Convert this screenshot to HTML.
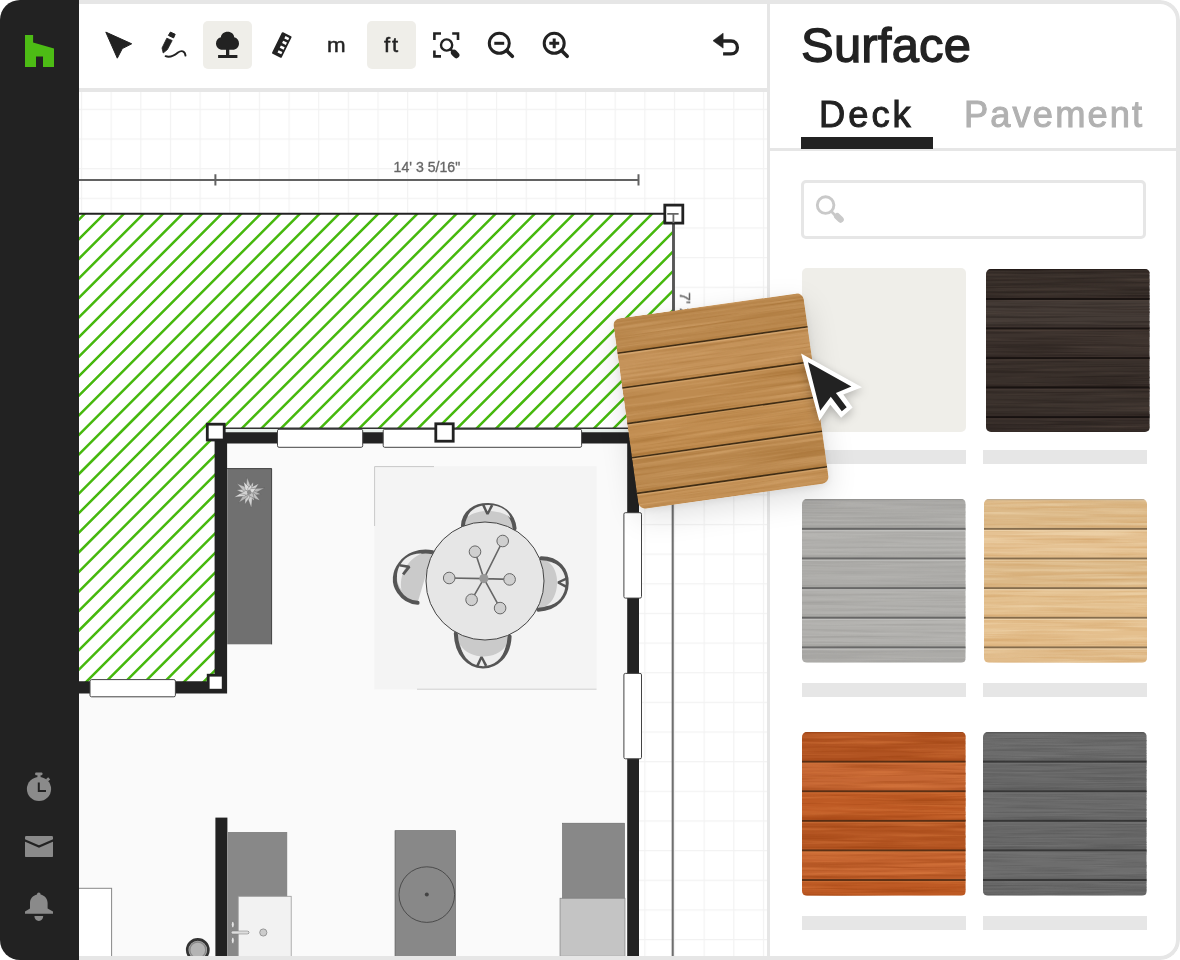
<!DOCTYPE html>
<html><head><meta charset="utf-8">
<style>
html,body{margin:0;padding:0;background:#fff;}
body{width:1180px;height:960px;overflow:hidden;font-family:"Liberation Sans",sans-serif;}
#frame{position:absolute;left:0;top:0;width:1180px;height:960px;border-radius:20px;overflow:hidden;background:#fff;}
.abs{position:absolute;}
svg text,.tt,#title,#tab1,#tab2{will-change:transform;}
#sidebar{left:0;top:0;width:78.9px;height:960px;background:#222;}
#toolbar{left:78px;top:4px;width:689px;height:84px;background:#fff;}
#tbline{left:78px;top:87.8px;width:689px;height:3.8px;background:#e6e6e6;}
#divider{left:767px;top:0;width:3px;height:960px;background:#e6e6e6;}
#panel{left:770px;top:0;width:410px;height:960px;background:#fff;}
#border{left:-20px;top:0;width:1192px;height:952px;border:4px solid #e6e6e6;border-radius:20px;pointer-events:none;}
.btn{width:48.8px;height:48.8px;border-radius:5px;background:#efeee9;}
.tt{color:#222;font-size:20.5px;line-height:24px;-webkit-text-stroke:0.45px #222;}
.sw{width:163.5px;height:163.5px;border-radius:5px;overflow:hidden;}
.lb{height:13.5px;background:#e6e6e6;}
</style></head><body>
<div id="frame">
<svg class="abs" style="left:0;top:0" width="1180" height="960" viewBox="0 0 1180 960">
<defs>
<pattern id="grid" x="51.3" y="108.8" width="29.65" height="29.65" patternUnits="userSpaceOnUse">
<path d="M0.6 0V29.65M0 0.6H29.65" stroke="#f2f2f2" stroke-width="1.2" fill="none"/>
</pattern>
<clipPath id="cv"><rect x="78" y="91" width="689" height="865"/></clipPath>
</defs>
<g clip-path="url(#cv)">
<rect x="78" y="91" width="689" height="865" fill="#fff"/>
<rect x="78" y="91" width="689" height="865" fill="url(#grid)"/>
<!-- hatch area -->
<clipPath id="hc"><path d="M78 214H673.4V428H215V682H78Z"/></clipPath>
<g clip-path="url(#hc)"><rect x="78" y="210" width="600" height="480" fill="#fff"/><path d="M90.50 208L-391.50 690M110.07 208L-371.93 690M129.63 208L-352.37 690M149.20 208L-332.80 690M168.76 208L-313.24 690M188.33 208L-293.67 690M207.90 208L-274.10 690M227.46 208L-254.54 690M247.03 208L-234.97 690M266.59 208L-215.41 690M286.16 208L-195.84 690M305.73 208L-176.27 690M325.29 208L-156.71 690M344.86 208L-137.14 690M364.42 208L-117.58 690M383.99 208L-98.01 690M403.56 208L-78.44 690M423.12 208L-58.88 690M442.69 208L-39.31 690M462.25 208L-19.75 690M481.82 208L-0.18 690M501.39 208L19.39 690M520.95 208L38.95 690M540.52 208L58.52 690M560.08 208L78.08 690M579.65 208L97.65 690M599.22 208L117.22 690M618.78 208L136.78 690M638.35 208L156.35 690M657.91 208L175.91 690M677.48 208L195.48 690M697.05 208L215.05 690M716.61 208L234.61 690M736.18 208L254.18 690M755.74 208L273.74 690M775.31 208L293.31 690M794.88 208L312.88 690M814.44 208L332.44 690M834.01 208L352.01 690M853.57 208L371.57 690M873.14 208L391.14 690M892.71 208L410.71 690M912.27 208L430.27 690M931.84 208L449.84 690M951.40 208L469.40 690M970.97 208L488.97 690M990.54 208L508.54 690M1010.10 208L528.10 690M1029.67 208L547.67 690M1049.23 208L567.23 690M1068.80 208L586.80 690M1088.37 208L606.37 690M1107.93 208L625.93 690M1127.50 208L645.50 690M1147.06 208L665.06 690" stroke="#46b80e" stroke-width="2.5" fill="none"/></g>
<path d="M78 213.8H673.4" stroke="#222" stroke-width="2.1"/>
<!-- vertical dim line right of hatch -->
<path d="M672.7 430V956" stroke="#6e6e6e" stroke-width="2.1"/><path d="M673.5 213.8V432" stroke="#565656" stroke-width="2.9"/>
<!-- floor -->
<path d="M227 443H627.5V956H78V693.5H227Z" fill="#fafafa"/>
<!-- thin strip above wall -->
<rect x="222" y="428" width="417" height="4.6" fill="#e9f0ec"/>
<path d="M222 428.2H639" stroke="#333" stroke-width="1.5"/>
<!-- walls -->
<path d="M214.6 432.3H639V956H627.2V443.5H227.1V693.6H78V681.2H214.6Z" fill="#222"/>
<rect x="215.4" y="817.6" width="12" height="140" fill="#222"/>
<!-- windows -->
<g fill="#fff" stroke="#444" stroke-width="1">
<rect x="277.5" y="429.3" width="85.2" height="18" rx="1.5"/>
<rect x="383.2" y="429.3" width="198.4" height="18" rx="1.5"/>
<rect x="90" y="679.6" width="85.4" height="17.2" rx="1.5"/>
<rect x="623.9" y="512.7" width="17.6" height="85.4" rx="1.5"/>
<rect x="623.9" y="673.4" width="17.6" height="85.4" rx="1.5"/>
</g>
<!-- rug -->
<rect x="374.3" y="466.2" width="222.4" height="223.2" fill="#f4f4f4"/>
<path d="M374.6 526V466.6H434" fill="none" stroke="#c8c8c8" stroke-width="1"/>
<path d="M417 689.2H596.5" fill="none" stroke="#d0d0d0" stroke-width="1"/>
<!-- left cabinet with plant -->
<rect x="227.2" y="468.3" width="44.6" height="176" fill="#707070"/>
<path d="M227 468.6H271.6V644.3" stroke="#3c3c3c" stroke-width="0.9" fill="none"/>
<g transform="translate(249.2 492.2)"><path transform="rotate(-8)" d="M0 1L2.4 -5.2L0 -15L-2.4 -5.2Z" fill="#c4c4c4" stroke="#5a5a5a" stroke-width="0.35"/><path transform="rotate(22)" d="M0 1L2.4 -3.8L0 -11L-2.4 -3.8Z" fill="#dcdcdc" stroke="#5a5a5a" stroke-width="0.35"/><path transform="rotate(48)" d="M0 1L2.4 -4.5L0 -13L-2.4 -4.5Z" fill="#d2d2d2" stroke="#5a5a5a" stroke-width="0.35"/><path transform="rotate(75)" d="M0 1L2.4 -5.6L0 -16L-2.4 -5.6Z" fill="#b8b8b8" stroke="#5a5a5a" stroke-width="0.35"/><path transform="rotate(100)" d="M0 1L2.4 -4.2L0 -12L-2.4 -4.2Z" fill="#b8b8b8" stroke="#5a5a5a" stroke-width="0.35"/><path transform="rotate(128)" d="M0 1L2.4 -4.9L0 -14L-2.4 -4.9Z" fill="#c4c4c4" stroke="#5a5a5a" stroke-width="0.35"/><path transform="rotate(150)" d="M0 1L2.4 -3.5L0 -10L-2.4 -3.5Z" fill="#d2d2d2" stroke="#5a5a5a" stroke-width="0.35"/><path transform="rotate(172)" d="M0 1L2.4 -5.6L0 -16L-2.4 -5.6Z" fill="#d2d2d2" stroke="#5a5a5a" stroke-width="0.35"/><path transform="rotate(200)" d="M0 1L2.4 -4.5L0 -13L-2.4 -4.5Z" fill="#d2d2d2" stroke="#5a5a5a" stroke-width="0.35"/><path transform="rotate(225)" d="M0 1L2.4 -5.2L0 -15L-2.4 -5.2Z" fill="#b8b8b8" stroke="#5a5a5a" stroke-width="0.35"/><path transform="rotate(252)" d="M0 1L2.4 -5.6L0 -16L-2.4 -5.6Z" fill="#dcdcdc" stroke="#5a5a5a" stroke-width="0.35"/><path transform="rotate(280)" d="M0 1L2.4 -4.5L0 -13L-2.4 -4.5Z" fill="#d2d2d2" stroke="#5a5a5a" stroke-width="0.35"/><path transform="rotate(305)" d="M0 1L2.4 -5.2L0 -15L-2.4 -5.2Z" fill="#c4c4c4" stroke="#5a5a5a" stroke-width="0.35"/><path transform="rotate(332)" d="M0 1L2.4 -4.2L0 -12L-2.4 -4.2Z" fill="#dcdcdc" stroke="#5a5a5a" stroke-width="0.35"/><path transform="rotate(15)" d="M0 1L2.4 -2.8L0 -8L-2.4 -2.8Z" fill="#dcdcdc" stroke="#5a5a5a" stroke-width="0.35"/><path transform="rotate(140)" d="M0 1L2.4 -2.8L0 -8L-2.4 -2.8Z" fill="#c4c4c4" stroke="#5a5a5a" stroke-width="0.35"/><path transform="rotate(260)" d="M0 1L2.4 -3.1L0 -9L-2.4 -3.1Z" fill="#d2d2d2" stroke="#5a5a5a" stroke-width="0.35"/><path transform="rotate(60)" d="M0 1L2.4 -2.8L0 -8L-2.4 -2.8Z" fill="#dcdcdc" stroke="#5a5a5a" stroke-width="0.35"/><circle r="2.2" fill="#8a8a8a"/></g>
<!-- dining set -->
<g id="dining">
<g fill="#cacaca" stroke="#555" stroke-width="4" stroke-linecap="round">
<path d="M462.9 526 C464 497.6 512 497.6 514.6 528.4"/>
<path d="M455.8 633.4 C457 677 508 677 509.6 636.4"/>
<path d="M541.2 558.2 C575.5 558 576 608 538.3 609.7"/>
<path d="M432.6 552.3 C405 547 386 574 399 592 C403 598 410 602.4 417.6 602.8"/>
</g>
<g fill="#ededed">
<path d="M467.5 517 C472 501 506 501 510.5 518 C500 509 478 509 467.5 517Z"/>
<path d="M460.5 645 C465 673 501 673 505.5 646 C497 660 469 660 460.5 645Z"/>
<path d="M548 562 C572 563 572 604 546 606 C560 598 561 570 548 562Z"/>
<path d="M422 553.5 C402 552 390 574 401.5 590 C399 576 406 560 422 553.5Z"/>
</g>
<g fill="#555">
<path d="M484.5 504.6L487.6 511.6L490.8 504.8L493.4 505.4L488.6 514.6H486.4L482 505.2Z"/>
<path d="M478.5 666.4L481.6 659.4L484.8 666.2L487.4 665.6L482.6 656.4H480.4L476 665.8Z"/>
<path d="M567.6 579.5L560.6 582.6L567.4 585.8L566.8 588.4L557.6 583.6V581.4L567 577Z"/>
<path d="M399.5 566.5L406.6 567.8L402 573.6L404.2 575.2L410.4 567.4L409.4 565.4L399.2 563.9Z"/>
</g>
<circle cx="485" cy="581" r="59" fill="#e6e6e6" stroke="#444" stroke-width="1"/>
<g stroke="#666" stroke-width="1.6">
<path d="M483.9 578.6L475 551.7M483.9 578.6L502.7 541M483.9 578.6L509.6 579.4M483.9 578.6L500.1 608.1M483.9 578.6L471.6 599.8M483.9 578.6L449.2 578"/>
</g>
<g fill="#cfcfcf" stroke="#666" stroke-width="1">
<circle cx="475" cy="551.7" r="5.8"/><circle cx="502.7" cy="541" r="5.8"/><circle cx="509.6" cy="579.4" r="5.8"/>
<circle cx="500.1" cy="608.1" r="5.8"/><circle cx="471.6" cy="599.8" r="5.8"/><circle cx="449.2" cy="578" r="5.8"/>
</g>
<circle cx="483.9" cy="578.6" r="4.6" fill="#999"/>
</g>
<!-- bottom furniture -->
<rect x="227.6" y="832" width="59.6" height="125" fill="#888"/>
<rect x="238.2" y="896.3" width="53" height="61" fill="#f2f2f2" stroke="#999" stroke-width="0.8"/>
<path d="M232.7 932.5H247.5" stroke="#777" stroke-width="3.6" stroke-linecap="round"/><path d="M232.7 932.5H247.5" stroke="#ddd" stroke-width="2.4" stroke-linecap="round"/><g fill="#e4e4e4" stroke="#666" stroke-width="0.6"><ellipse cx="232.8" cy="924.6" rx="1.5" ry="3.2"/><ellipse cx="232.8" cy="940.4" rx="1.5" ry="3.2"/></g>
<circle cx="263.3" cy="932.5" r="3.6" fill="#ccc" stroke="#888" stroke-width="0.8"/>
<rect x="395" y="830.7" width="60.4" height="126" fill="#888" stroke="#555" stroke-width="0.6"/>
<circle cx="426.8" cy="894.6" r="27.8" fill="none" stroke="#444" stroke-width="0.9"/>
<circle cx="426.8" cy="894.6" r="2" fill="#444"/>
<rect x="562.5" y="823.2" width="62" height="76" fill="#888" stroke="#666" stroke-width="0.6"/>
<rect x="560" y="898.2" width="65" height="58" fill="#c4c4c4" stroke="#777" stroke-width="0.6"/>
<rect x="70" y="888.3" width="41.6" height="70" fill="#fff" stroke="#888" stroke-width="1"/>
<circle cx="197.8" cy="950" r="10.6" fill="#b4b4b4" stroke="#333" stroke-width="2.6"/><circle cx="197.8" cy="950" r="8" fill="none" stroke="#8a8a8a" stroke-width="1.4"/>
<!-- dimension line -->
<path d="M78 180H638.5M215.4 174.2V185.6M638.5 174.2V185.6" stroke="#626262" stroke-width="2" fill="none"/>
<text x="393.6" y="172" font-family="Liberation Sans, sans-serif" font-size="15.4" fill="#666" stroke="#666" stroke-width="0.35" textLength="66.6" lengthAdjust="spacingAndGlyphs">14' 3 5/16"</text>
<text transform="translate(680 292.4) rotate(90)" font-family="Liberation Sans, sans-serif" font-size="15.4" fill="#666" stroke="#666" stroke-width="0.35">7' 2 3/8"</text>
<!-- handles -->
<g fill="#fff" stroke="#222" stroke-width="2.8">
<rect x="664.8" y="205.1" width="18" height="18"/>
<rect x="207.3" y="424.2" width="16.9" height="15.8"/>
<rect x="435.8" y="423.8" width="17.4" height="17.4"/>
<rect x="208.2" y="675.2" width="15" height="15"/>
</g>
<path d="M667.2 213.8H678.6M673.4 213.8V223" stroke="#666" stroke-width="1.8"/>
</g>
</svg>
<div id="toolbar" class="abs"></div>
<div id="tbline" class="abs"></div>
<div class="abs btn" style="left:203.3px;top:20.7px"></div>
<div class="abs btn" style="left:366.9px;top:20.7px"></div>
<svg class="abs" style="left:0;top:0" width="770" height="92" viewBox="0 0 770 92" fill="#222">
<!-- select arrow -->
<path d="M105.8 32.1L131.7 43.8L122.3 48.6L117.3 58.2Z" stroke="#222" stroke-width="1" stroke-linejoin="round"/>
<!-- pencil -->
<path d="M170.4 32.1L175.2 34.3L173.6 37.9L168.4 35.4Z" stroke="#222" stroke-width="1" stroke-linejoin="round"/>
<path d="M166.8 38.2L172.2 40.5L167.4 49.6L163.2 53L162 48Z" stroke="#222" stroke-width="0.8" stroke-linejoin="round"/>
<path d="M165.6 56.2C171 58 175 55 178 52.5C181.5 50 185 51 185.5 55.6" fill="none" stroke="#222" stroke-width="1.9" stroke-linecap="round"/>
<!-- tree -->
<path d="M227.6 31.8C231.4 31.8 234 34.3 234.2 37.2C237.2 37.8 239 40.4 239 43.4C239 47 236.3 49.7 232.6 49.7H229.3V55H237.4V58H218.1V55H226V49.7H222.4C218.8 49.7 216 47 216 43.4C216 40.4 217.9 37.8 220.9 37.2C221.2 34.3 223.8 31.8 227.6 31.8Z"/>
<!-- ruler -->
<g transform="translate(281.8 45) rotate(26)">
<rect x="-5.4" y="-12" width="10.8" height="24" rx="1"/>
<g fill="#fff"><rect x="-0.6" y="-9.6" width="4.2" height="2.6"/><rect x="-0.6" y="-4.4" width="4.2" height="2.6"/><rect x="-0.6" y="0.8" width="4.2" height="2.6"/><rect x="-0.6" y="6" width="4.2" height="2.6"/></g>
</g>
<!-- fit zoom -->
<g fill="none" stroke="#222" stroke-width="2.6">
<path d="M434.4 40V33.5H441M452.2 33.5H458V40M434.4 50.5V56.4H441"/>
<circle cx="446.6" cy="45" r="5.6" stroke-width="2.4"/>
<path d="M450.4 49.2L454 52.8" stroke-width="2.6"/><path d="M454 52.8L456.3 55.1" stroke-width="6.2" stroke-linecap="round"/>
</g>
<!-- zoom out -->
<g fill="none" stroke="#222" stroke-width="3">
<circle cx="499.3" cy="43.3" r="10"/>
<path d="M506.6 50.6L512.3 56.3" stroke-width="3.6" stroke-linecap="round"/>
<path d="M494.3 43.3H504.2" stroke-width="3"/>
<circle cx="554.2" cy="43.3" r="10"/>
<path d="M561.5 50.6L567.2 56.3" stroke-width="3.6" stroke-linecap="round"/>
<path d="M549.3 43.3H559.2M554.2 38.4V48.2" stroke-width="3"/>
</g>
<!-- undo -->
<path d="M713 40.7L723.1 33.2V48.1Z" stroke="#222" stroke-width="0.6" stroke-linejoin="round"/>
<path d="M722 41H731C735 41 737.4 44 737.4 47.5C737.4 51 735 53.9 731 53.9H723.1" fill="none" stroke="#222" stroke-width="3.3"/>
</svg>
<div class="abs tt" style="left:327.2px;top:33.1px;transform:scaleX(1.09);transform-origin:0 0;">m</div>
<div class="abs tt" style="left:384px;top:33.1px;letter-spacing:1.6px;transform:scaleX(1.08);transform-origin:0 0;">ft</div>
<div id="divider" class="abs"></div>
<div id="panel" class="abs"></div>
<div class="abs" id="title" style="left:800.7px;top:15.7px;font-size:49px;line-height:58px;font-weight:normal;color:#222;-webkit-text-stroke:1.3px #222;letter-spacing:0.2px;white-space:nowrap;">Surface</div>
<div class="abs" id="tab1" style="left:819px;top:94px;font-size:36.3px;line-height:42px;font-weight:normal;color:#222;-webkit-text-stroke:1px #222;letter-spacing:3px;white-space:nowrap;">Deck</div>
<div class="abs" id="tab2" style="left:963.8px;top:94px;font-size:36.3px;line-height:42px;font-weight:normal;color:#b1b1b1;-webkit-text-stroke:1px #b1b1b1;letter-spacing:2.1px;white-space:nowrap;">Pavement</div>
<div class="abs" style="left:770px;top:148.2px;width:406px;height:2.8px;background:#e6e6e6;"></div>
<div class="abs" style="left:801px;top:137.3px;width:132.3px;height:11.5px;background:#222;"></div>
<div class="abs" style="left:801.2px;top:179.5px;width:338.8px;height:53.9px;border:3px solid #e6e6e6;border-radius:5px;"></div>
<svg class="abs" style="left:810px;top:190px" width="40" height="40" viewBox="810 190 40 40"><circle cx="825.6" cy="205.1" r="8.3" fill="none" stroke="#c9c9c9" stroke-width="2.9"/><path d="M831 211L838 218.5" stroke="#c9c9c9" stroke-width="2.6"/><path d="M837.2 216.2L840.6 219.6" stroke="#c9c9c9" stroke-width="6.4" stroke-linecap="round"/></svg>
<div class="abs sw" style="left:802.2px;top:268px;background:#efeee9;"></div>
<!--SW0--><svg class="abs sw" style="left:986px;top:268.5px" width="163.6" height="163.6" viewBox="0 0 163.6 163.6">
<defs><filter id="ddk" x="0" y="0" width="100%" height="100%" color-interpolation-filters="sRGB"><feTurbulence type="fractalNoise" baseFrequency="0.008 0.4" numOctaves="3" seed="11"/><feColorMatrix type="matrix" values="0 0 0 0 0.102  0 0 0 0 0.075  0 0 0 0 0.067  2.2 0 0 0 -0.95"/></filter><filter id="ldk" x="0" y="0" width="100%" height="100%" color-interpolation-filters="sRGB"><feTurbulence type="fractalNoise" baseFrequency="0.008 0.4" numOctaves="3" seed="24"/><feColorMatrix type="matrix" values="0 0 0 0 0.333  0 0 0 0 0.278  0 0 0 0 0.247  2.2 0 0 0 -0.95"/></filter></defs>
<rect width="163.6" height="163.6" fill="#3d332e"/>
<rect x="0" y="0.00" width="163.6" height="30.00" fill="#000" opacity="0.050"/>
<rect x="0" y="30.00" width="163.6" height="29.55" fill="#fff" opacity="0.040"/>
<rect x="0" y="89.10" width="163.6" height="29.55" fill="#000" opacity="0.050"/>
<rect x="0" y="118.65" width="163.6" height="29.55" fill="#000" opacity="0.020"/>
<rect x="0" y="148.20" width="163.6" height="15.40" fill="#000" opacity="0.120"/>
<g transform="translate(0 0)"><rect x="-3" y="0.00" width="169.6" height="30.00" filter="url(#ldk)" opacity="0.5"/><rect x="-3" y="0.00" width="169.6" height="30.00" filter="url(#ddk)" opacity="0.45"/></g>
<g transform="translate(-71 0)"><rect x="68" y="30.00" width="169.6" height="29.55" filter="url(#ldk)" opacity="0.5"/><rect x="68" y="30.00" width="169.6" height="29.55" filter="url(#ddk)" opacity="0.45"/></g>
<g transform="translate(-142 0)"><rect x="139" y="59.55" width="169.6" height="29.55" filter="url(#ldk)" opacity="0.5"/><rect x="139" y="59.55" width="169.6" height="29.55" filter="url(#ddk)" opacity="0.45"/></g>
<g transform="translate(-63 0)"><rect x="60" y="89.10" width="169.6" height="29.55" filter="url(#ldk)" opacity="0.5"/><rect x="60" y="89.10" width="169.6" height="29.55" filter="url(#ddk)" opacity="0.45"/></g>
<g transform="translate(-134 0)"><rect x="131" y="118.65" width="169.6" height="29.55" filter="url(#ldk)" opacity="0.5"/><rect x="131" y="118.65" width="169.6" height="29.55" filter="url(#ddk)" opacity="0.45"/></g>
<g transform="translate(-55 0)"><rect x="52" y="148.20" width="169.6" height="15.40" filter="url(#ldk)" opacity="0.5"/><rect x="52" y="148.20" width="169.6" height="15.40" filter="url(#ddk)" opacity="0.45"/></g>
<rect x="0" y="26.40" width="163.6" height="3" fill="#1a1311" opacity="0.22"/>
<rect x="0" y="29.00" width="163.6" height="2.0" fill="#120d0b" opacity="0.8"/>
<rect x="0" y="31.00" width="163.6" height="1.4" fill="#5a4a42" opacity="0.25"/>
<rect x="0" y="55.95" width="163.6" height="3" fill="#1a1311" opacity="0.22"/>
<rect x="0" y="58.55" width="163.6" height="2.0" fill="#120d0b" opacity="0.8"/>
<rect x="0" y="60.55" width="163.6" height="1.4" fill="#5a4a42" opacity="0.25"/>
<rect x="0" y="85.50" width="163.6" height="3" fill="#1a1311" opacity="0.22"/>
<rect x="0" y="88.10" width="163.6" height="2.0" fill="#120d0b" opacity="0.8"/>
<rect x="0" y="90.10" width="163.6" height="1.4" fill="#5a4a42" opacity="0.25"/>
<rect x="0" y="115.05" width="163.6" height="3" fill="#1a1311" opacity="0.22"/>
<rect x="0" y="117.65" width="163.6" height="2.0" fill="#120d0b" opacity="0.8"/>
<rect x="0" y="119.65" width="163.6" height="1.4" fill="#5a4a42" opacity="0.25"/>
<rect x="0" y="144.60" width="163.6" height="3" fill="#1a1311" opacity="0.22"/>
<rect x="0" y="147.20" width="163.6" height="2.0" fill="#120d0b" opacity="0.8"/>
<rect x="0" y="149.20" width="163.6" height="1.4" fill="#5a4a42" opacity="0.25"/>
<rect x="0" y="0" width="163.6" height="1.2" fill="#1a1311" opacity="0.6"/>
</svg>
<svg class="abs sw" style="left:802px;top:499.3px" width="163.6" height="163.6" viewBox="0 0 163.6 163.6">
<defs><filter id="dgr" x="0" y="0" width="100%" height="100%" color-interpolation-filters="sRGB"><feTurbulence type="fractalNoise" baseFrequency="0.008 0.4" numOctaves="3" seed="5"/><feColorMatrix type="matrix" values="0 0 0 0 0.541  0 0 0 0 0.537  0 0 0 0 0.525  2.2 0 0 0 -0.95"/></filter><filter id="lgr" x="0" y="0" width="100%" height="100%" color-interpolation-filters="sRGB"><feTurbulence type="fractalNoise" baseFrequency="0.008 0.4" numOctaves="3" seed="18"/><feColorMatrix type="matrix" values="0 0 0 0 0.776  0 0 0 0 0.773  0 0 0 0 0.761  2.2 0 0 0 -0.95"/></filter></defs>
<rect width="163.6" height="163.6" fill="#b0afac"/>
<rect x="0" y="0.00" width="163.6" height="29.90" fill="#000" opacity="0.020"/>
<rect x="0" y="29.90" width="163.6" height="29.65" fill="#fff" opacity="0.020"/>
<rect x="0" y="59.55" width="163.6" height="29.65" fill="#000" opacity="0.010"/>
<rect x="0" y="89.20" width="163.6" height="29.65" fill="#fff" opacity="0.010"/>
<rect x="0" y="118.85" width="163.6" height="29.65" fill="#fff" opacity="0.030"/>
<rect x="0" y="148.50" width="163.6" height="15.10" fill="#000" opacity="0.020"/>
<g transform="translate(0 0)"><rect x="-3" y="0.00" width="169.6" height="29.90" filter="url(#lgr)" opacity="0.32"/><rect x="-3" y="0.00" width="169.6" height="29.90" filter="url(#dgr)" opacity="0.32"/></g>
<g transform="translate(-71 0)"><rect x="68" y="29.90" width="169.6" height="29.65" filter="url(#lgr)" opacity="0.32"/><rect x="68" y="29.90" width="169.6" height="29.65" filter="url(#dgr)" opacity="0.32"/></g>
<g transform="translate(-142 0)"><rect x="139" y="59.55" width="169.6" height="29.65" filter="url(#lgr)" opacity="0.32"/><rect x="139" y="59.55" width="169.6" height="29.65" filter="url(#dgr)" opacity="0.32"/></g>
<g transform="translate(-63 0)"><rect x="60" y="89.20" width="169.6" height="29.65" filter="url(#lgr)" opacity="0.32"/><rect x="60" y="89.20" width="169.6" height="29.65" filter="url(#dgr)" opacity="0.32"/></g>
<g transform="translate(-134 0)"><rect x="131" y="118.85" width="169.6" height="29.65" filter="url(#lgr)" opacity="0.32"/><rect x="131" y="118.85" width="169.6" height="29.65" filter="url(#dgr)" opacity="0.32"/></g>
<g transform="translate(-55 0)"><rect x="52" y="148.50" width="169.6" height="15.10" filter="url(#lgr)" opacity="0.32"/><rect x="52" y="148.50" width="169.6" height="15.10" filter="url(#dgr)" opacity="0.32"/></g>
<rect x="0" y="26.30" width="163.6" height="3" fill="#8a8986" opacity="0.22"/>
<rect x="0" y="28.90" width="163.6" height="2.0" fill="#555" opacity="0.78"/>
<rect x="0" y="30.90" width="163.6" height="1.4" fill="#d0d0ce" opacity="0.5"/>
<rect x="0" y="55.95" width="163.6" height="3" fill="#8a8986" opacity="0.22"/>
<rect x="0" y="58.55" width="163.6" height="2.0" fill="#555" opacity="0.78"/>
<rect x="0" y="60.55" width="163.6" height="1.4" fill="#d0d0ce" opacity="0.5"/>
<rect x="0" y="85.60" width="163.6" height="3" fill="#8a8986" opacity="0.22"/>
<rect x="0" y="88.20" width="163.6" height="2.0" fill="#555" opacity="0.78"/>
<rect x="0" y="90.20" width="163.6" height="1.4" fill="#d0d0ce" opacity="0.5"/>
<rect x="0" y="115.25" width="163.6" height="3" fill="#8a8986" opacity="0.22"/>
<rect x="0" y="117.85" width="163.6" height="2.0" fill="#555" opacity="0.78"/>
<rect x="0" y="119.85" width="163.6" height="1.4" fill="#d0d0ce" opacity="0.5"/>
<rect x="0" y="144.90" width="163.6" height="3" fill="#8a8986" opacity="0.22"/>
<rect x="0" y="147.50" width="163.6" height="2.0" fill="#555" opacity="0.78"/>
<rect x="0" y="149.50" width="163.6" height="1.4" fill="#d0d0ce" opacity="0.5"/>
<rect x="0" y="0" width="163.6" height="1.2" fill="#8a8a88" opacity="0.6"/>
</svg>
<svg class="abs sw" style="left:983.8px;top:499.3px" width="163.6" height="163.6" viewBox="0 0 163.6 163.6">
<defs><filter id="dtn" x="0" y="0" width="100%" height="100%" color-interpolation-filters="sRGB"><feTurbulence type="fractalNoise" baseFrequency="0.009 0.3" numOctaves="3" seed="23"/><feColorMatrix type="matrix" values="0 0 0 0 0.812  0 0 0 0 0.612  0 0 0 0 0.369  2.2 0 0 0 -0.95"/></filter><filter id="ltn" x="0" y="0" width="100%" height="100%" color-interpolation-filters="sRGB"><feTurbulence type="fractalNoise" baseFrequency="0.009 0.3" numOctaves="3" seed="36"/><feColorMatrix type="matrix" values="0 0 0 0 0.957  0 0 0 0 0.875  0 0 0 0 0.733  2.2 0 0 0 -0.95"/></filter></defs>
<rect width="163.6" height="163.6" fill="#e4bf8d"/>
<rect x="0" y="0.00" width="163.6" height="29.90" fill="#000" opacity="0.030"/>
<rect x="0" y="29.90" width="163.6" height="29.65" fill="#fff" opacity="0.060"/>
<rect x="0" y="59.55" width="163.6" height="29.65" fill="#000" opacity="0.030"/>
<rect x="0" y="89.20" width="163.6" height="29.65" fill="#fff" opacity="0.030"/>
<rect x="0" y="148.50" width="163.6" height="15.10" fill="#000" opacity="0.010"/>
<g transform="translate(0 0)"><rect x="-3" y="0.00" width="169.6" height="29.90" filter="url(#ltn)" opacity="0.55"/><rect x="-3" y="0.00" width="169.6" height="29.90" filter="url(#dtn)" opacity="0.55"/></g>
<g transform="translate(-71 0)"><rect x="68" y="29.90" width="169.6" height="29.65" filter="url(#ltn)" opacity="0.55"/><rect x="68" y="29.90" width="169.6" height="29.65" filter="url(#dtn)" opacity="0.55"/></g>
<g transform="translate(-142 0)"><rect x="139" y="59.55" width="169.6" height="29.65" filter="url(#ltn)" opacity="0.55"/><rect x="139" y="59.55" width="169.6" height="29.65" filter="url(#dtn)" opacity="0.55"/></g>
<g transform="translate(-63 0)"><rect x="60" y="89.20" width="169.6" height="29.65" filter="url(#ltn)" opacity="0.55"/><rect x="60" y="89.20" width="169.6" height="29.65" filter="url(#dtn)" opacity="0.55"/></g>
<g transform="translate(-134 0)"><rect x="131" y="118.85" width="169.6" height="29.65" filter="url(#ltn)" opacity="0.55"/><rect x="131" y="118.85" width="169.6" height="29.65" filter="url(#dtn)" opacity="0.55"/></g>
<g transform="translate(-55 0)"><rect x="52" y="148.50" width="169.6" height="15.10" filter="url(#ltn)" opacity="0.55"/><rect x="52" y="148.50" width="169.6" height="15.10" filter="url(#dtn)" opacity="0.55"/></g>
<rect x="0" y="26.30" width="163.6" height="3" fill="#cf9c5e" opacity="0.22"/>
<rect x="0" y="28.95" width="163.6" height="1.9" fill="#6b573c" opacity="0.78"/>
<rect x="0" y="30.85" width="163.6" height="1.4" fill="#f6e4c4" opacity="0.5"/>
<rect x="0" y="55.95" width="163.6" height="3" fill="#cf9c5e" opacity="0.22"/>
<rect x="0" y="58.60" width="163.6" height="1.9" fill="#6b573c" opacity="0.78"/>
<rect x="0" y="60.50" width="163.6" height="1.4" fill="#f6e4c4" opacity="0.5"/>
<rect x="0" y="85.60" width="163.6" height="3" fill="#cf9c5e" opacity="0.22"/>
<rect x="0" y="88.25" width="163.6" height="1.9" fill="#6b573c" opacity="0.78"/>
<rect x="0" y="90.15" width="163.6" height="1.4" fill="#f6e4c4" opacity="0.5"/>
<rect x="0" y="115.25" width="163.6" height="3" fill="#cf9c5e" opacity="0.22"/>
<rect x="0" y="117.90" width="163.6" height="1.9" fill="#6b573c" opacity="0.78"/>
<rect x="0" y="119.80" width="163.6" height="1.4" fill="#f6e4c4" opacity="0.5"/>
<rect x="0" y="144.90" width="163.6" height="3" fill="#cf9c5e" opacity="0.22"/>
<rect x="0" y="147.55" width="163.6" height="1.9" fill="#6b573c" opacity="0.78"/>
<rect x="0" y="149.45" width="163.6" height="1.4" fill="#f6e4c4" opacity="0.5"/>
<rect x="0" y="0" width="163.6" height="1.2" fill="#a9a095" opacity="0.6"/>
</svg>
<svg class="abs sw" style="left:802px;top:732.2px" width="163.6" height="163.6" viewBox="0 0 163.6 163.6">
<defs><filter id="dor" x="0" y="0" width="100%" height="100%" color-interpolation-filters="sRGB"><feTurbulence type="fractalNoise" baseFrequency="0.009 0.3" numOctaves="3" seed="31"/><feColorMatrix type="matrix" values="0 0 0 0 0.588  0 0 0 0 0.235  0 0 0 0 0.047  2.2 0 0 0 -0.95"/></filter><filter id="lor" x="0" y="0" width="100%" height="100%" color-interpolation-filters="sRGB"><feTurbulence type="fractalNoise" baseFrequency="0.009 0.3" numOctaves="3" seed="44"/><feColorMatrix type="matrix" values="0 0 0 0 0.871  0 0 0 0 0.498  0 0 0 0 0.263  2.2 0 0 0 -0.95"/></filter></defs>
<rect width="163.6" height="163.6" fill="#c25c25"/>
<rect x="0" y="0.00" width="163.6" height="29.70" fill="#000" opacity="0.080"/>
<rect x="0" y="29.70" width="163.6" height="29.60" fill="#fff" opacity="0.070"/>
<rect x="0" y="59.30" width="163.6" height="29.60" fill="#000" opacity="0.020"/>
<rect x="0" y="88.90" width="163.6" height="29.60" fill="#000" opacity="0.070"/>
<rect x="0" y="118.50" width="163.6" height="29.60" fill="#fff" opacity="0.050"/>
<rect x="0" y="148.10" width="163.6" height="15.50" fill="#000" opacity="0.020"/>
<g transform="translate(0 0)"><rect x="-3" y="0.00" width="169.6" height="29.70" filter="url(#lor)" opacity="0.55"/><rect x="-3" y="0.00" width="169.6" height="29.70" filter="url(#dor)" opacity="0.55"/></g>
<g transform="translate(-71 0)"><rect x="68" y="29.70" width="169.6" height="29.60" filter="url(#lor)" opacity="0.55"/><rect x="68" y="29.70" width="169.6" height="29.60" filter="url(#dor)" opacity="0.55"/></g>
<g transform="translate(-142 0)"><rect x="139" y="59.30" width="169.6" height="29.60" filter="url(#lor)" opacity="0.55"/><rect x="139" y="59.30" width="169.6" height="29.60" filter="url(#dor)" opacity="0.55"/></g>
<g transform="translate(-63 0)"><rect x="60" y="88.90" width="169.6" height="29.60" filter="url(#lor)" opacity="0.55"/><rect x="60" y="88.90" width="169.6" height="29.60" filter="url(#dor)" opacity="0.55"/></g>
<g transform="translate(-134 0)"><rect x="131" y="118.50" width="169.6" height="29.60" filter="url(#lor)" opacity="0.55"/><rect x="131" y="118.50" width="169.6" height="29.60" filter="url(#dor)" opacity="0.55"/></g>
<g transform="translate(-55 0)"><rect x="52" y="148.10" width="169.6" height="15.50" filter="url(#lor)" opacity="0.55"/><rect x="52" y="148.10" width="169.6" height="15.50" filter="url(#dor)" opacity="0.55"/></g>
<rect x="0" y="26.10" width="163.6" height="3" fill="#963c0c" opacity="0.22"/>
<rect x="0" y="28.75" width="163.6" height="1.9" fill="#3e2210" opacity="0.78"/>
<rect x="0" y="30.65" width="163.6" height="1.4" fill="#e08a4c" opacity="0.35"/>
<rect x="0" y="55.70" width="163.6" height="3" fill="#963c0c" opacity="0.22"/>
<rect x="0" y="58.35" width="163.6" height="1.9" fill="#3e2210" opacity="0.78"/>
<rect x="0" y="60.25" width="163.6" height="1.4" fill="#e08a4c" opacity="0.35"/>
<rect x="0" y="85.30" width="163.6" height="3" fill="#963c0c" opacity="0.22"/>
<rect x="0" y="87.95" width="163.6" height="1.9" fill="#3e2210" opacity="0.78"/>
<rect x="0" y="89.85" width="163.6" height="1.4" fill="#e08a4c" opacity="0.35"/>
<rect x="0" y="114.90" width="163.6" height="3" fill="#963c0c" opacity="0.22"/>
<rect x="0" y="117.55" width="163.6" height="1.9" fill="#3e2210" opacity="0.78"/>
<rect x="0" y="119.45" width="163.6" height="1.4" fill="#e08a4c" opacity="0.35"/>
<rect x="0" y="144.50" width="163.6" height="3" fill="#963c0c" opacity="0.22"/>
<rect x="0" y="147.15" width="163.6" height="1.9" fill="#3e2210" opacity="0.78"/>
<rect x="0" y="149.05" width="163.6" height="1.4" fill="#e08a4c" opacity="0.35"/>
<rect x="0" y="0" width="163.6" height="1.2" fill="#8c3a10" opacity="0.6"/>
</svg>
<svg class="abs sw" style="left:983.4px;top:732.2px" width="163.6" height="163.6" viewBox="0 0 163.6 163.6">
<defs><filter id="ddg" x="0" y="0" width="100%" height="100%" color-interpolation-filters="sRGB"><feTurbulence type="fractalNoise" baseFrequency="0.012 0.6" numOctaves="3" seed="41"/><feColorMatrix type="matrix" values="0 0 0 0 0.306  0 0 0 0 0.306  0 0 0 0 0.306  2.2 0 0 0 -0.95"/></filter><filter id="ldg" x="0" y="0" width="100%" height="100%" color-interpolation-filters="sRGB"><feTurbulence type="fractalNoise" baseFrequency="0.012 0.6" numOctaves="3" seed="54"/><feColorMatrix type="matrix" values="0 0 0 0 0.494  0 0 0 0 0.494  0 0 0 0 0.494  2.2 0 0 0 -0.95"/></filter></defs>
<rect width="163.6" height="163.6" fill="#6b6b6b"/>
<rect x="0" y="0.00" width="163.6" height="29.70" fill="#fff" opacity="0.010"/>
<rect x="0" y="29.70" width="163.6" height="29.60" fill="#000" opacity="0.030"/>
<rect x="0" y="88.90" width="163.6" height="29.60" fill="#000" opacity="0.020"/>
<rect x="0" y="118.50" width="163.6" height="29.60" fill="#fff" opacity="0.020"/>
<rect x="0" y="148.10" width="163.6" height="15.50" fill="#000" opacity="0.020"/>
<g transform="translate(0 0)"><rect x="-3" y="0.00" width="169.6" height="29.70" filter="url(#ldg)" opacity="0.45"/><rect x="-3" y="0.00" width="169.6" height="29.70" filter="url(#ddg)" opacity="0.45"/></g>
<g transform="translate(-71 0)"><rect x="68" y="29.70" width="169.6" height="29.60" filter="url(#ldg)" opacity="0.45"/><rect x="68" y="29.70" width="169.6" height="29.60" filter="url(#ddg)" opacity="0.45"/></g>
<g transform="translate(-142 0)"><rect x="139" y="59.30" width="169.6" height="29.60" filter="url(#ldg)" opacity="0.45"/><rect x="139" y="59.30" width="169.6" height="29.60" filter="url(#ddg)" opacity="0.45"/></g>
<g transform="translate(-63 0)"><rect x="60" y="88.90" width="169.6" height="29.60" filter="url(#ldg)" opacity="0.45"/><rect x="60" y="88.90" width="169.6" height="29.60" filter="url(#ddg)" opacity="0.45"/></g>
<g transform="translate(-134 0)"><rect x="131" y="118.50" width="169.6" height="29.60" filter="url(#ldg)" opacity="0.45"/><rect x="131" y="118.50" width="169.6" height="29.60" filter="url(#ddg)" opacity="0.45"/></g>
<g transform="translate(-55 0)"><rect x="52" y="148.10" width="169.6" height="15.50" filter="url(#ldg)" opacity="0.45"/><rect x="52" y="148.10" width="169.6" height="15.50" filter="url(#ddg)" opacity="0.45"/></g>
<rect x="0" y="26.10" width="163.6" height="3" fill="#4e4e4e" opacity="0.22"/>
<rect x="0" y="28.70" width="163.6" height="2.0" fill="#2a2a2a" opacity="0.8"/>
<rect x="0" y="30.70" width="163.6" height="1.4" fill="#858585" opacity="0.3"/>
<rect x="0" y="55.70" width="163.6" height="3" fill="#4e4e4e" opacity="0.22"/>
<rect x="0" y="58.30" width="163.6" height="2.0" fill="#2a2a2a" opacity="0.8"/>
<rect x="0" y="60.30" width="163.6" height="1.4" fill="#858585" opacity="0.3"/>
<rect x="0" y="85.30" width="163.6" height="3" fill="#4e4e4e" opacity="0.22"/>
<rect x="0" y="87.90" width="163.6" height="2.0" fill="#2a2a2a" opacity="0.8"/>
<rect x="0" y="89.90" width="163.6" height="1.4" fill="#858585" opacity="0.3"/>
<rect x="0" y="114.90" width="163.6" height="3" fill="#4e4e4e" opacity="0.22"/>
<rect x="0" y="117.50" width="163.6" height="2.0" fill="#2a2a2a" opacity="0.8"/>
<rect x="0" y="119.50" width="163.6" height="1.4" fill="#858585" opacity="0.3"/>
<rect x="0" y="144.50" width="163.6" height="3" fill="#4e4e4e" opacity="0.22"/>
<rect x="0" y="147.10" width="163.6" height="2.0" fill="#2a2a2a" opacity="0.8"/>
<rect x="0" y="149.10" width="163.6" height="1.4" fill="#858585" opacity="0.3"/>
<rect x="0" y="0" width="163.6" height="1.2" fill="#4a4a4a" opacity="0.6"/>
</svg>
<!--SW1--><div class="abs lb" style="left:802.3px;top:450.2px;width:163.5px"></div>
<div class="abs lb" style="left:982.8px;top:450.2px;width:164px"></div>
<div class="abs lb" style="left:802.3px;top:683px;width:163.5px"></div>
<div class="abs lb" style="left:982.8px;top:683px;width:164px"></div>
<div class="abs lb" style="left:802.3px;top:916.2px;width:163.5px"></div>
<div class="abs lb" style="left:982.8px;top:916.2px;width:164px"></div>

<div id="border" class="abs"></div>
<div id="sidebar" class="abs"></div>
<svg class="abs" style="left:0;top:0" width="79" height="960" viewBox="0 0 79 960">
<path d="M25 35H33.1V42.5L54 48.4V67H43V56.5H36V67H25Z" fill="#4dbc15"/>
<g fill="#8a8a8a">
<circle cx="39" cy="789" r="12.1"/>
<rect x="35.2" y="772.4" width="7.2" height="2.8" rx="0.8"/>
<rect x="37.4" y="774" width="3.2" height="4"/>
<path d="M45.9 779.3L48.2 777.2L50.2 779.4L47.9 781.5Z"/>
<path d="M38.8 782.6V791H46" fill="none" stroke="#222" stroke-width="2"/>
<rect x="25" y="836.1" width="28" height="21" rx="1.2"/>
<path d="M24.5 840.2L39 846.6L53.5 840.2" fill="none" stroke="#222" stroke-width="2.2"/>
<path d="M38.8 892.6C39.8 892.6 40.6 893.4 40.6 894.6C44.8 895.6 47.6 898.8 47.6 903V908.6L53 911.4V913.8H25V911.4L30 908.6V903C30 898.8 32.8 895.6 37 894.6C37 893.4 37.8 892.6 38.8 892.6Z"/>
<path d="M34.4 916H43.2C43.2 918.8 41.4 920.9 38.8 920.9C36.2 920.9 34.4 918.8 34.4 916Z"/>
</g>
</svg>
<!--DT0--><div class="abs" style="left:625.10px;top:305.15px;width:192.4px;height:192.4px;transform:rotate(-7.93deg);border-radius:7px;box-shadow:0 10px 30px rgba(0,0,0,0.13),0 2px 8px rgba(0,0,0,0.07);">
<svg style="display:block;border-radius:7px;overflow:hidden" width="192.4" height="192.4" viewBox="0 0 192.4 192.4">
<defs><filter id="ddr" x="0" y="0" width="100%" height="100%" color-interpolation-filters="sRGB"><feTurbulence type="fractalNoise" baseFrequency="0.008 0.35" numOctaves="3" seed="9"/><feColorMatrix type="matrix" values="0 0 0 0 0.604  0 0 0 0 0.392  0 0 0 0 0.149  2.2 0 0 0 -0.95"/></filter><filter id="ldr" x="0" y="0" width="100%" height="100%" color-interpolation-filters="sRGB"><feTurbulence type="fractalNoise" baseFrequency="0.008 0.35" numOctaves="3" seed="22"/><feColorMatrix type="matrix" values="0 0 0 0 0.867  0 0 0 0 0.690  0 0 0 0 0.478  2.2 0 0 0 -0.95"/></filter></defs>
<rect width="192.4" height="192.4" fill="#c28e52"/>
<rect x="0" y="0.00" width="192.4" height="34.44" fill="#000" opacity="0.030"/>
<rect x="0" y="34.44" width="192.4" height="35.11" fill="#fff" opacity="0.050"/>
<rect x="0" y="69.55" width="192.4" height="35.89" fill="#000" opacity="0.020"/>
<rect x="0" y="139.87" width="192.4" height="35.98" fill="#000" opacity="0.030"/>
<rect x="0" y="175.85" width="192.4" height="16.55" fill="#fff" opacity="0.020"/>
<g transform="translate(0 0)"><rect x="-3" y="0.00" width="198.4" height="34.44" filter="url(#ldr)" opacity="0.5"/><rect x="-3" y="0.00" width="198.4" height="34.44" filter="url(#ddr)" opacity="0.5"/></g>
<g transform="translate(-71 0)"><rect x="68" y="34.44" width="198.4" height="35.11" filter="url(#ldr)" opacity="0.5"/><rect x="68" y="34.44" width="198.4" height="35.11" filter="url(#ddr)" opacity="0.5"/></g>
<g transform="translate(-142 0)"><rect x="139" y="69.55" width="198.4" height="35.89" filter="url(#ldr)" opacity="0.5"/><rect x="139" y="69.55" width="198.4" height="35.89" filter="url(#ddr)" opacity="0.5"/></g>
<g transform="translate(-63 0)"><rect x="60" y="105.44" width="198.4" height="34.43" filter="url(#ldr)" opacity="0.5"/><rect x="60" y="105.44" width="198.4" height="34.43" filter="url(#ddr)" opacity="0.5"/></g>
<g transform="translate(-134 0)"><rect x="131" y="139.87" width="198.4" height="35.98" filter="url(#ldr)" opacity="0.5"/><rect x="131" y="139.87" width="198.4" height="35.98" filter="url(#ddr)" opacity="0.5"/></g>
<g transform="translate(-55 0)"><rect x="52" y="175.85" width="198.4" height="16.55" filter="url(#ldr)" opacity="0.5"/><rect x="52" y="175.85" width="198.4" height="16.55" filter="url(#ddr)" opacity="0.5"/></g>
<rect x="0" y="30.84" width="192.4" height="3" fill="#9a6426" opacity="0.22"/>
<rect x="0" y="33.64" width="192.4" height="1.6" fill="#33240f" opacity="0.9"/>
<rect x="0" y="35.24" width="192.4" height="1.4" fill="#e2b681" opacity="0.4"/>
<rect x="0" y="65.95" width="192.4" height="3" fill="#9a6426" opacity="0.22"/>
<rect x="0" y="68.75" width="192.4" height="1.6" fill="#33240f" opacity="0.9"/>
<rect x="0" y="70.35" width="192.4" height="1.4" fill="#e2b681" opacity="0.4"/>
<rect x="0" y="101.84" width="192.4" height="3" fill="#9a6426" opacity="0.22"/>
<rect x="0" y="104.64" width="192.4" height="1.6" fill="#33240f" opacity="0.9"/>
<rect x="0" y="106.24" width="192.4" height="1.4" fill="#e2b681" opacity="0.4"/>
<rect x="0" y="136.27" width="192.4" height="3" fill="#9a6426" opacity="0.22"/>
<rect x="0" y="139.07" width="192.4" height="1.6" fill="#33240f" opacity="0.9"/>
<rect x="0" y="140.67" width="192.4" height="1.4" fill="#e2b681" opacity="0.4"/>
<rect x="0" y="172.25" width="192.4" height="3" fill="#9a6426" opacity="0.22"/>
<rect x="0" y="175.05" width="192.4" height="1.6" fill="#33240f" opacity="0.9"/>
<rect x="0" y="176.65" width="192.4" height="1.4" fill="#e2b681" opacity="0.4"/>
</svg></div>
<!--DT1--><svg class="abs" style="left:780px;top:330px;filter:drop-shadow(0 3px 5px rgba(0,0,0,0.25))" width="110" height="110" viewBox="780 330 110 110">
<path d="M801.1 353.4L862 387.2L843.3 394.4L852.6 407.5L841.1 417.8L830.3 404.7L819.3 421.1Z" fill="#fff"/>
<path d="M808 362.3L851.4 386.4L835.9 393L846.7 407.3L841.8 411.3L830.8 396.7L820.2 410.8Z" fill="#222"/>
</svg>
</div>
</body></html>
